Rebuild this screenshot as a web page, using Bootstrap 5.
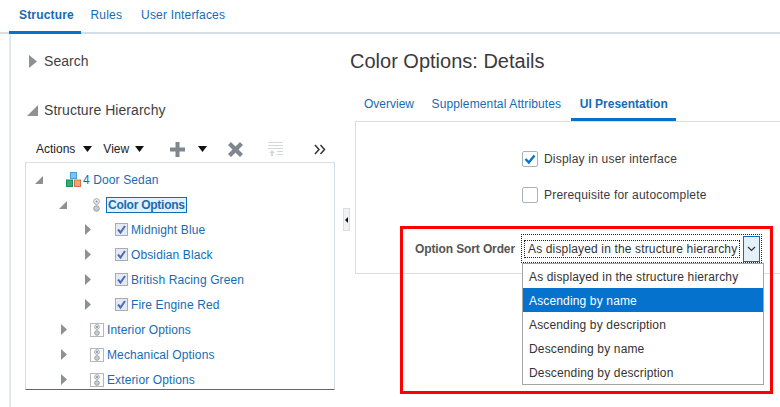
<!DOCTYPE html>
<html lang="en">
<head>
<meta charset="utf-8">
<title>Color Options: Details</title>
<link href="https://cdn.jsdelivr.net/npm/bootstrap@5.3.0/dist/css/bootstrap.min.css" rel="stylesheet">
<style>
html,body{height:407px;overflow:hidden}
body{font-family:"Liberation Sans",Arial,sans-serif;font-size:12px;color:#333;background:#fff;position:relative}
.top-tabs{height:34px;border-bottom:2px solid #d6dfe6;padding-left:9px;flex-wrap:nowrap}
.top-tabs a,.sub-tabs a{display:block;color:#146cb4;text-decoration:none;line-height:1;white-space:nowrap}
.top-tabs a{height:34px;padding:9px 9.5px 0;letter-spacing:.18px}
.top-tabs li:first-child a{padding-left:10px;padding-right:9px;width:72px}
.top-tabs a.on,.sub-tabs a.on{font-weight:700;border-bottom:3px solid #0572ce}
.page-body{height:373px}
.left-col{width:334px;margin-left:9px;border-left:2px solid #e4e9ee;padding-left:14px;flex:none}
.sec-head{font-size:14px;letter-spacing:.05px;color:#3f3f3f;display:flex;align-items:center;line-height:1}
.sec-one{height:20px;margin-top:17px;padding-left:4px;gap:6px}
.sec-two{height:20px;margin-top:29px;padding-left:4px;gap:6px}
.tool-row{height:24px;margin-top:17px;padding-left:11px;color:#222;width:310px;position:relative}
.tool-row svg{display:block;flex:none}
.tree-box{width:310px;height:228px;border:1px solid #d6dfe6;border-bottom:1px solid #666;margin-top:1px;padding-top:4px}
.tree-row{height:25px;display:flex;align-items:center;color:#146cb4;letter-spacing:.12px;white-space:nowrap}
.tree-row svg{flex:none;display:block}
.lv0{padding-left:9px}.lv1c{padding-left:35px}.lv2{padding-left:59px}
.gap-a{margin-left:23px;margin-right:2px}
.gap-b{margin-left:26px;margin-right:6px}
.gap-c{margin-left:24px;margin-right:3px}
.gap-d{margin-left:23px;margin-right:3px}
.sel-node{font-weight:700;background:#e4f0fa;border:1px solid #146cb4;padding:0 1px;line-height:14px;letter-spacing:-.25px}
.splitter{width:7px;height:23px;background:#f0f2f4;border:1px solid #d6dfe6;position:absolute;left:343px;top:208px;display:flex;align-items:center;justify-content:center}
.right-col{padding-left:7px;min-width:0;flex:1}
.page-title{font-size:20px;font-weight:400;line-height:1;margin:17px 0 0;color:#3a3a3a}
.sub-tabs{margin:24px 0 0 5px;height:27px;border-bottom:1px solid #d6dfe6;flex-wrap:nowrap}
.sub-tabs a{height:26px;padding:3px 9px 0;letter-spacing:.13px}
.sub-tabs li:first-child a{letter-spacing:0;padding-right:8.5px}
.sub-tabs a.on{width:105px;letter-spacing:0;margin-left:.5px}
.detail-pane{margin-left:5px;height:152px;border-left:1px solid #d6dfe6;border-bottom:1px solid #d6dfe6;position:relative;padding:29px 0 0 166px}
.chk-row{height:36px;display:flex;gap:6px;color:#3a3a3a;letter-spacing:.2px}
.chk-box{width:16px;height:16px;border:1px solid #aab2ba;border-radius:2px;display:block;background:#fff;flex:none;padding:0}
.chk-label{line-height:16px}
.sort-row{display:flex;align-items:center;margin-top:11px;margin-left:-107px}
.sort-label{font-weight:700;color:#555;width:106px;letter-spacing:-.12px;line-height:14px;flex:none}
.sort-control{width:241px;height:29px;border:1px dotted #222;padding:0 0 0 2px;display:flex;align-items:center;flex:none}
.sort-value{width:216px;height:18px;border:1px dotted #222;padding:0 3px;line-height:16px;color:#333;letter-spacing:.15px;white-space:nowrap;flex:none}
.sort-btn{width:17px;height:26px;margin-left:3px;border:1px solid #0572ce;background:#e4f0fa;display:flex;align-items:center;justify-content:center;padding:0;flex:none}
.sort-menu{position:absolute;left:166px;top:141px;width:242px;height:122px;border:1px solid #a5a5a5;background:#fff;z-index:3;list-style:none;margin:0;padding:0}
.sort-menu li{height:24px;line-height:24px;padding:1px 0 0 6px;letter-spacing:.15px;color:#333;white-space:nowrap}
.sort-menu li.hot{background:#0572ce;color:#fff}
.red-note{position:absolute;left:400px;top:226px;width:373px;height:168px;border:3px solid #f00;z-index:4;pointer-events:none}
</style>
</head>
<body>
<ul class="nav top-tabs">
  <li class="nav-item"><a class="on" href="#">Structure</a></li>
  <li class="nav-item"><a href="#">Rules</a></li>
  <li class="nav-item"><a href="#">User Interfaces</a></li>
</ul>
<div class="d-flex page-body">
  <div class="left-col">
    <div class="sec-head sec-one">
      <svg width="9" height="13" viewBox="0 0 9 13"><path d="M0 0 8 6.500 0 13Z" fill="#8c9196"/></svg>
      <span>Search</span>
    </div>
    <div class="sec-head sec-two">
      <svg width="11" height="11" viewBox="0 0 11 11" style="margin-left:-2px"><path d="M11 0V11H0Z" fill="#8c9196"/></svg>
      <span>Structure Hierarchy</span>
    </div>
    <div class="d-flex align-items-center tool-row">
      <span>Actions</span>
      <svg class="ms-2" width="9" height="6" viewBox="0 0 9 6"><path d="M0 0H9L4.500 6Z" fill="#111"/></svg>
      <span style="margin-left:11px">View</span>
      <svg style="margin-left:6px" width="9" height="6" viewBox="0 0 9 6"><path d="M0 0H9L4.500 6Z" fill="#111"/></svg>
      <svg style="margin-left:26px" width="15" height="15" viewBox="0 0 15 15"><path d="M5.500 0h4v5.500H15v4H9.500V15h-4V9.500H0v-4h5.500Z" fill="#7f878e"/></svg>
      <svg style="margin-left:13px" width="9" height="6" viewBox="0 0 9 6"><path d="M0 0H9L4.500 6Z" fill="#111"/></svg>
      <svg style="margin-left:21px" width="15" height="15" viewBox="0 0 15 15"><path d="M3 0 7.500 4.500 12 0l3 3-4.500 4.500L15 12l-3 3-4.500-4.500L3 15l-3-3 4.500-4.500L0 3Z" fill="#7f878e"/></svg>
      <svg style="margin-left:25px" width="15" height="15" viewBox="0 0 15 15"><path d="M0 .5h15M0 3.500h15M0 6.500h15M9 9.500h6M9 12.500h6" stroke="#d5d8da" stroke-width="1" fill="none"/><path d="M4 8 7 11H5V14H3V11H1Z" fill="#d5d8da"/></svg>
      <svg style="margin-left:31px" width="12" height="11" viewBox="0 0 12 11"><path d="M1 1 5 5.500 1 10M6.500 1l4 4.500-4 4.500" stroke="#333" stroke-width="1.500" fill="none"/></svg>
    </div>
    <div class="tree-box">
      <div class="tree-row lv0">
        <svg width="8" height="8" viewBox="0 0 8 8"><path d="M8 0V8H0Z" fill="#8c9196"/></svg>
        <svg class="gap-a" width="15" height="15" viewBox="0 0 15 15"><rect x="4.500" y=".5" width="6" height="6" fill="#7cc4f0" stroke="#4a9fd8"/><rect x=".5" y="8" width="6" height="6.500" fill="#39a87a" stroke="#1f8a5e"/><rect x="8.500" y="8" width="6" height="6.500" fill="#f4a27c" stroke="#d9704a"/></svg>
        <span>4 Door Sedan</span>
      </div>
      <div class="tree-row lv1c">
        <svg width="8" height="8" viewBox="0 0 8 8" style="margin-left:-2px"><path d="M8 0V8H0Z" fill="#8c9196"/></svg>
        <svg class="gap-b" width="7" height="14" viewBox="0 0 7 14"><circle cx="3.500" cy="3.500" r="2.800" fill="#fff" stroke="#9aa0a6"/><circle cx="3.500" cy="3.500" r="1.100" fill="#7f878e"/><circle cx="3.500" cy="10.500" r="2.800" fill="#c9cdd1" stroke="#9aa0a6"/></svg>
        <span class="sel-node">Color Options</span>
      </div>
      <div class="tree-row lv2">
        <svg width="6" height="11" viewBox="0 0 6 11"><path d="M0 0 6 5.500 0 11Z" fill="#8c9196"/></svg>
        <svg class="gap-c" width="13" height="13" viewBox="0 0 13 13"><rect x=".5" y=".5" width="12" height="12" fill="#e4e9f2" stroke="#a9adb2"/><path d="M3 6.500 5.500 9.500 10 3" stroke="#4a6fb5" stroke-width="2" fill="none"/></svg>
        <span>Midnight Blue</span>
      </div>
      <div class="tree-row lv2">
        <svg width="6" height="11" viewBox="0 0 6 11"><path d="M0 0 6 5.500 0 11Z" fill="#8c9196"/></svg>
        <svg class="gap-c" width="13" height="13" viewBox="0 0 13 13"><rect x=".5" y=".5" width="12" height="12" fill="#e4e9f2" stroke="#a9adb2"/><path d="M3 6.500 5.500 9.500 10 3" stroke="#4a6fb5" stroke-width="2" fill="none"/></svg>
        <span>Obsidian Black</span>
      </div>
      <div class="tree-row lv2">
        <svg width="6" height="11" viewBox="0 0 6 11"><path d="M0 0 6 5.500 0 11Z" fill="#8c9196"/></svg>
        <svg class="gap-c" width="13" height="13" viewBox="0 0 13 13"><rect x=".5" y=".5" width="12" height="12" fill="#e4e9f2" stroke="#a9adb2"/><path d="M3 6.500 5.500 9.500 10 3" stroke="#4a6fb5" stroke-width="2" fill="none"/></svg>
        <span>British Racing Green</span>
      </div>
      <div class="tree-row lv2">
        <svg width="6" height="11" viewBox="0 0 6 11"><path d="M0 0 6 5.500 0 11Z" fill="#8c9196"/></svg>
        <svg class="gap-c" width="13" height="13" viewBox="0 0 13 13"><rect x=".5" y=".5" width="12" height="12" fill="#e4e9f2" stroke="#a9adb2"/><path d="M3 6.500 5.500 9.500 10 3" stroke="#4a6fb5" stroke-width="2" fill="none"/></svg>
        <span>Fire Engine Red</span>
      </div>
      <div class="tree-row lv1c">
        <svg width="6" height="11" viewBox="0 0 6 11"><path d="M0 0 6 5.500 0 11Z" fill="#8c9196"/></svg>
        <svg class="gap-d" width="14" height="14" viewBox="0 0 14 14"><rect x=".5" y=".5" width="13" height="13" fill="#fff" stroke="#b4b8bc"/><circle cx="7" cy="4" r="2.300" fill="#fff" stroke="#9aa0a6"/><circle cx="7" cy="4" r="1" fill="#7f878e"/><circle cx="7" cy="10" r="2.300" fill="#c9cdd1" stroke="#9aa0a6"/></svg>
        <span>Interior Options</span>
      </div>
      <div class="tree-row lv1c">
        <svg width="6" height="11" viewBox="0 0 6 11"><path d="M0 0 6 5.500 0 11Z" fill="#8c9196"/></svg>
        <svg class="gap-d" width="14" height="14" viewBox="0 0 14 14"><rect x=".5" y=".5" width="13" height="13" fill="#fff" stroke="#b4b8bc"/><circle cx="7" cy="4" r="2.300" fill="#fff" stroke="#9aa0a6"/><circle cx="7" cy="4" r="1" fill="#7f878e"/><circle cx="7" cy="10" r="2.300" fill="#c9cdd1" stroke="#9aa0a6"/></svg>
        <span>Mechanical Options</span>
      </div>
      <div class="tree-row lv1c">
        <svg width="6" height="11" viewBox="0 0 6 11"><path d="M0 0 6 5.500 0 11Z" fill="#8c9196"/></svg>
        <svg class="gap-d" width="14" height="14" viewBox="0 0 14 14"><rect x=".5" y=".5" width="13" height="13" fill="#fff" stroke="#b4b8bc"/><circle cx="7" cy="4" r="2.300" fill="#fff" stroke="#9aa0a6"/><circle cx="7" cy="4" r="1" fill="#7f878e"/><circle cx="7" cy="10" r="2.300" fill="#c9cdd1" stroke="#9aa0a6"/></svg>
        <span>Exterior Options</span>
      </div>
    </div>
  </div>
  <div class="right-col">
    <h1 class="page-title">Color Options: Details</h1>
    <ul class="nav sub-tabs">
      <li class="nav-item"><a href="#">Overview</a></li>
      <li class="nav-item"><a href="#">Supplemental Attributes</a></li>
      <li class="nav-item"><a class="on" href="#">UI Presentation</a></li>
    </ul>
    <div class="detail-pane">
      <div class="chk-row">
        <span class="chk-box"><svg class="d-block" width="14" height="14" viewBox="0 0 14 14"><path d="M2.500 7 5.800 10.500 11.500 3.500" stroke="#0572ce" stroke-width="2.400" fill="none"/></svg></span>
        <span class="chk-label">Display in user interface</span>
      </div>
      <div class="chk-row">
        <span class="chk-box"></span>
        <span class="chk-label">Prerequisite for autocomplete</span>
      </div>
      <div class="sort-row">
        <span class="sort-label">Option Sort Order</span>
        <div class="sort-control">
          <span class="sort-value">As displayed in the structure hierarchy</span>
          <button class="sort-btn" type="button" aria-label="Open"><svg width="9" height="6" viewBox="0 0 9 6"><path d="M1 1 4.500 4.500 8 1" stroke="#333" stroke-width="1.200" fill="none"/></svg></button>
        </div>
      </div>
      <ul class="sort-menu">
        <li>As displayed in the structure hierarchy</li>
        <li class="hot">Ascending by name</li>
        <li>Ascending by description</li>
        <li>Descending by name</li>
        <li>Descending by description</li>
      </ul>
    </div>
  </div>
</div>
<div class="splitter"><svg width="3" height="6" viewBox="0 0 3 6"><path d="M3 0V6L0 3Z" fill="#111"/></svg></div>
<div class="red-note"></div>
<script src="https://cdn.jsdelivr.net/npm/bootstrap@5.3.0/dist/js/bootstrap.bundle.min.js"></script>
</body>
</html>
